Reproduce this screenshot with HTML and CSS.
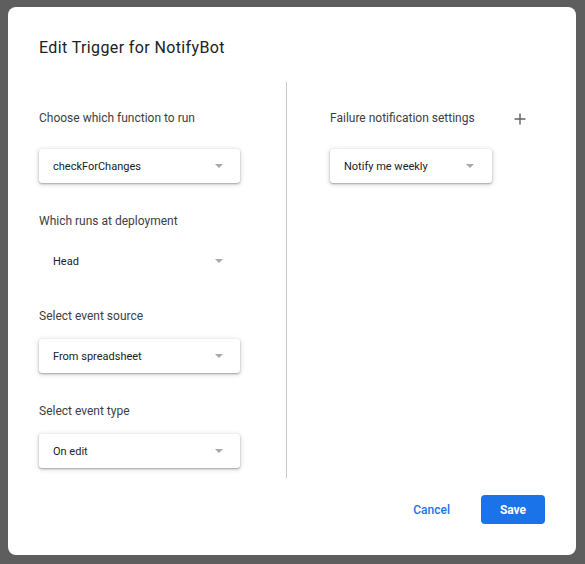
FILE: index.html
```html
<!DOCTYPE html>
<html lang="en">
<head>
<meta charset="utf-8">
<title>Edit Trigger for NotifyBot</title>
<link rel="stylesheet" href="styles.css">
</head>
<body>
<div class="dialog">
  <h1 class="title">Edit Trigger for NotifyBot</h1>
  <div class="columns">
    <div class="col col-left">
      <div class="field field-first">
        <div class="label">Choose which function to run</div>
        <div class="select raised"><span>checkForChanges</span><i class="arrow"></i></div>
      </div>
      <div class="field">
        <div class="label">Which runs at deployment</div>
        <div class="select flat"><span>Head</span><i class="arrow"></i></div>
      </div>
      <div class="field">
        <div class="label">Select event source</div>
        <div class="select raised"><span>From spreadsheet</span><i class="arrow"></i></div>
      </div>
      <div class="field">
        <div class="label">Select event type</div>
        <div class="select raised"><span>On edit</span><i class="arrow"></i></div>
      </div>
    </div>
    <div class="col col-right">
      <div class="field field-first">
        <div class="label-row">
          <div class="label">Failure notification settings</div>
          <svg class="plus" width="12" height="12" viewBox="0 0 12 12" aria-hidden="true"><path d="M6 0.5V11.5M0.5 6H11.5" stroke="#5f6368" stroke-width="1.4" fill="none"/></svg>
        </div>
        <div class="select raised narrow"><span>Notify me weekly</span><i class="arrow"></i></div>
      </div>
    </div>
  </div>
  <div class="footer">
    <button class="btn btn-text">Cancel</button>
    <button class="btn btn-primary">Save</button>
  </div>
</div>
</body>
</html>
```

FILE: styles.css
```css
* { box-sizing: border-box; }
html, body { margin: 0; padding: 0; }
body {
  background: #5e5e5e;
  font-family: Roboto, "Liberation Sans", Arial, sans-serif;
  width: 585px;
  height: 564px;
  overflow: hidden;
  padding: 7px 0 0 8px;
}
.dialog {
  width: 568px;
  height: 548px;
  background: #fff;
  border-radius: 8px;
  padding: 31px 31px 31px 31px;
  display: flex;
  flex-direction: column;
}
.title {
  margin: 0;
  font-size: 16px;
  line-height: 20px;
  font-weight: 400;
  letter-spacing: 0.38px;
  color: #202124;
}
.columns {
  margin-top: 24px;
  height: 396px;
  display: flex;
}
.col-left {
  width: 248px;
  border-right: 1px solid #c9c9c9;
  padding-top: 28px;
}
.col-right {
  padding-left: 43px;
  padding-top: 28px;
}
.field { margin-top: 30px; }
.field-first { margin-top: 0; }
.label {
  font-size: 12px;
  line-height: 16px;
  color: #3c4043;
  margin-bottom: 15px;
}
.field-first .label { margin-bottom: 23px; }
.label-row {
  width: 196px;
  display: flex;
  justify-content: space-between;
  align-items: flex-start;
}
.label-row .plus { margin-top: 3px; }
.select {
  width: 201px;
  height: 34px;
  border-radius: 3px;
  display: flex;
  align-items: center;
  justify-content: space-between;
  padding: 0 17px 0 14px;
  font-size: 11px;
  color: #202124;
  background: #fff;
}
.select.narrow { width: 162px; padding-right: 18px; }
.raised {
  box-shadow: 0 1px 2px rgba(0,0,0,0.3), 0 1px 5px 1px rgba(0,0,0,0.12);
}
.arrow {
  width: 0;
  height: 0;
  border-left: 4px solid transparent;
  border-right: 4px solid transparent;
  border-top: 4px solid #a8a8a8;
}
.footer {
  margin-top: 17px;
  display: flex;
  justify-content: flex-end;
  align-items: center;
}
.btn {
  font-family: Roboto, "Liberation Sans", Arial, sans-serif;
  font-size: 12px;
  font-weight: 500;
  height: 29px;
  border: none;
  border-radius: 4px;
  cursor: pointer;
  padding: 0;
}
.btn-text {
  background: transparent;
  color: #1a73e8;
  padding: 0 15px;
  margin-right: 16px;
}
.btn-primary {
  background: #1a73e8;
  color: #fff;
  width: 64px;
  font-weight: 700;
}
```
